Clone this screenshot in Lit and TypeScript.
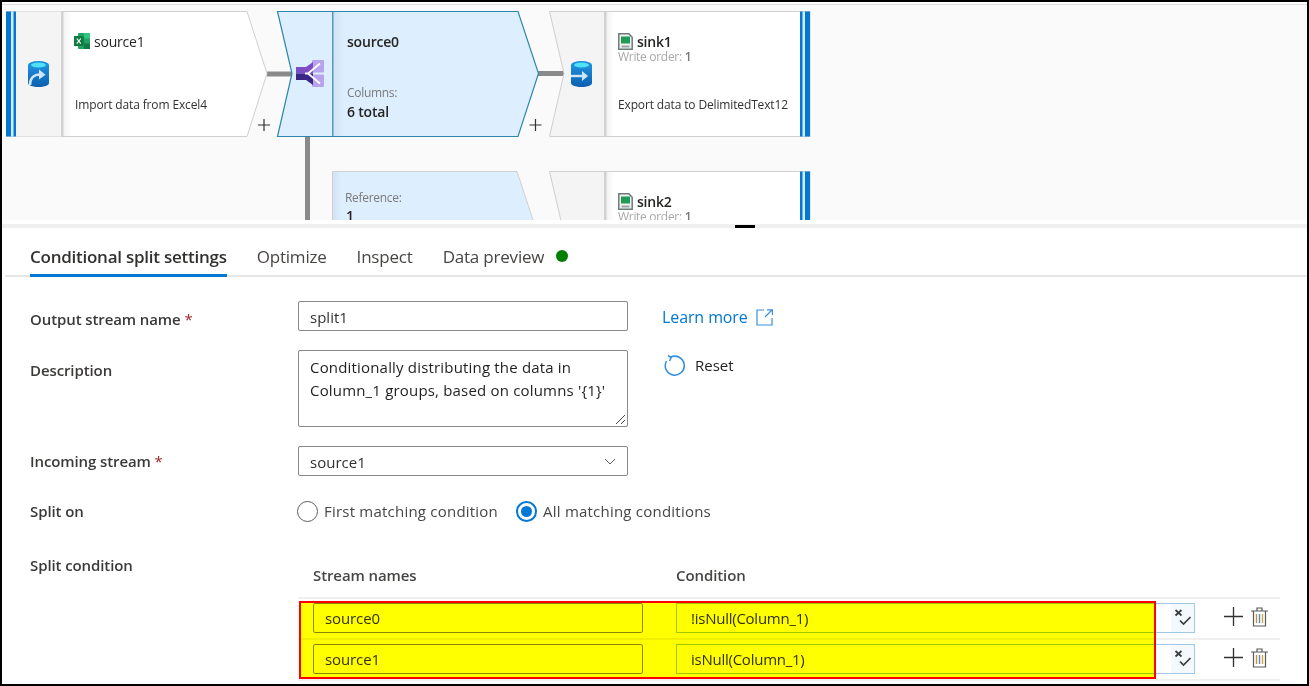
import { LitElement, html, css, svg } from "lit";
import { customElement } from "lit/decorators.js";

const barrel = (x: number, y: number, kind: "src" | "sink") => svg`
  <g transform="translate(${x} ${y})">
    <path d="M0 4v18c0 2.400 4.700 4 10.500 4S21 24.400 21 22V4z" fill="url(#bar)"/>
    <ellipse cx="10.500" cy="4" rx="10.500" ry="4" fill="#1b8fd8"/>
    <ellipse cx="10.500" cy="4" rx="7.500" ry="2.600" fill="#50e0f8"/>
    ${kind === "src"
      ? svg`<path d="M2 24c0-7 4-10.500 10-10.500" fill="none" stroke="#cfe6f8" stroke-width="2.600"/><path d="M11 8.500l6.500 5.200-6.500 4.800z" fill="#cfe6f8"/>`
      : svg`<path d="M0 15h12" stroke="#cfe6f8" stroke-width="2.400"/><path d="M11 10l6 5-6 5z" fill="#cfe6f8"/>`}
  </g>`;

const excel = (x: number, y: number) => svg`
  <g transform="translate(${x} ${y})">
    <rect x="4" y="0" width="12" height="16" rx="1" fill="#21a366"/>
    <rect x="10" y="0" width="6" height="5.500" fill="#33c481"/>
    <rect x="10" y="10.500" width="6" height="5.500" fill="#107c41"/>
    <rect x="4" y="5" width="6" height="6" fill="#185c37" opacity=".6"/>
    <rect x="0" y="3" width="9.500" height="10" fill="#107c41"/>
    <path d="M2.800 5.500l4 5.200M6.800 5.500l-4 5.200" stroke="#fff" stroke-width="1.100"/>
  </g>`;

const csv = (x: number, y: number) => svg`
  <g transform="translate(${x} ${y})">
    <path d="M.8.800h10l3.400 3.400v12.100H.800z" fill="#f2f2f2" stroke="#6d7a7a" stroke-width="1.500"/>
    <rect x="3" y="3.500" width="9" height="7" fill="#1f9a55"/>
    <rect x="3.500" y="12.500" width="8" height="2" fill="#9aa3a3"/>
  </g>`;

const splitIcon = svg`
  <g transform="translate(296 60)">
    <rect x="16" y="0" width="12" height="12.500" rx="1" fill="#b9a2ee"/>
    <rect x="16" y="14.500" width="12" height="12.500" rx="1" fill="#b9a2ee"/>
    <path d="M0 7H10L17 2V13.500H0z" fill="#7c4dc4"/>
    <path d="M0 13.500H17V25L10 20H0z" fill="#3b2685"/>
    <path d="M9 13.500H12L24 3.500M12 13.500L24 23.500" fill="none" stroke="#fff" stroke-width="1.800"/>
  </g>`;

type Label = { x: number; y: number; t: string; b?: string; c: string };
const labels: Label[] = [
  { x: 94, y: 42, t: "source1", c: "name" },
  { x: 75, y: 105, t: "Import data from Excel4", c: "small wide" },
  { x: 347, y: 42, t: "source0", c: "name strong" },
  { x: 347, y: 93, t: "Columns:", c: "small muted" },
  { x: 347, y: 112, t: "6 total", c: "name strong" },
  { x: 637, y: 42, t: "sink1", c: "name strong" },
  { x: 618, y: 57, t: "Write order: ", b: "1", c: "small faint" },
  { x: 618, y: 105, t: "Export data to DelimitedText12", c: "small wide" },
  { x: 345, y: 198, t: "Reference:", c: "small muted" },
  { x: 346, y: 216, t: "1", c: "name strong" },
  { x: 637, y: 202, t: "sink2", c: "name strong" },
  { x: 618, y: 217, t: "Write order: ", b: "1", c: "small faint" },
];

@customElement("cond-row")
class CondRow extends LitElement {
  static properties = { name: {}, expr: {} };
  declare name: string;
  declare expr: string;
  static styles = css`
    :host { display: flex; align-items: center; height: 41px; border-bottom: 2px solid #f0f0f0; box-sizing: border-box; padding-left: 15px; font: 15px "Open Sans", sans-serif; color: #323130; letter-spacing: -0.1px; }
    .name { width: 330px; height: 30px; box-sizing: border-box; border: 1px solid #8a8886; border-radius: 2px; padding: 0 11px; display: flex; align-items: center; margin-top: -1px; }
    .expr { margin-left: 33px; width: 519px; height: 30px; box-sizing: border-box; border: 1px solid #9fc8e6; display: flex; align-items: center; padding-left: 14px; justify-content: space-between; letter-spacing: -0.25px; margin-top: -1px; }
    .btn { width: 23px; height: 28px; background: #f3f9fd; display: flex; align-items: center; justify-content: center; }
    .plus { margin-left: 29px; display: flex; margin-top: -4px; }
    .trash { margin-left: 8px; display: flex; margin-top: -4px; }
  `;
  render() {
    return html`
      <div class="name">${this.name}</div>
      <div class="expr">${this.expr}
        <div class="btn"><svg width="20" height="20" viewBox="0 0 20 20" fill="none" stroke="#3c3c3c" stroke-width="1.700"><path d="M2.500 2l6 5.500M8.500 2l-6 5.500"/><path d="M7 12.500l3.500 3.500 7-7"/></svg></div>
      </div>
      <div class="plus"><svg width="19" height="19" viewBox="0 0 19 19" stroke="#323130" stroke-width="1.300"><path d="M0 9.500h19M9.500 0v19"/></svg></div>
      <div class="trash"><svg width="17" height="20" viewBox="0 0 17 20" fill="none" stroke="#5a5a5a" stroke-width="1.200"><path d="M0 4h17M6 4V1h5v3"/><path d="M2.500 4v15h12V4"/><path d="M5.500 7v9" stroke="#d98a3a" stroke-width="1.400"/><path d="M8.500 7v9" stroke="#4a90c8" stroke-width="1.400"/><path d="M11.500 7v9" stroke="#d9a23a" stroke-width="1.400"/></svg></div>
    `;
  }
}

@customElement("app-root")
class AppRoot extends LitElement {
  static styles = css`
    :host { display: block; width: 1309px; height: 686px; overflow: hidden; }
    * { box-sizing: border-box; }
    .frame { width: 1309px; height: 686px; border: 2px solid #000; display: flex; flex-direction: column; overflow: hidden; background: #fff; font-family: "Open Sans", "Noto Sans", sans-serif; color: #323130; }
    .canvas { position: relative; height: 218px; flex: none; overflow: hidden; background: #fafafa; }
    .canvas svg { position: absolute; left: 0; top: 0; }
    .lab { position: absolute; line-height: 16px; white-space: nowrap; }
    .name { font-size: 14px; color: #252423; letter-spacing: -0.2px; }
    .strong { font-weight: 600; }
    .small { font-size: 12px; color: #323130; letter-spacing: -0.3px; }
    .wide { letter-spacing: -0.14px; }
    .muted { color: #7a7a7a; }
    .faint { color: #a8a8a8; }
    .faint b { color: #777; font-weight: 600; }
    .gap { height: 4px; flex: none; background: #fff; }
    .split { position: relative; height: 4px; flex: none; background: #f0f0f0; }
    .handle { position: absolute; left: 733px; top: 1px; width: 20px; height: 3px; background: #000; }
    .tabs { display: flex; height: 49px; flex: none; margin-left: 3px; padding-left: 25px; gap: 30px; border-bottom: 2px solid #e6e6e6; font-size: 17px; letter-spacing: -0.2px; }
    .tab { display: flex; align-items: center; gap: 12px; height: 49px; padding-top: 7px; color: #484644; }
    .tab.on { color: #323130; font-weight: 600; letter-spacing: -0.25px; border-bottom: 3px solid #0078d4; padding-top: 10px; }
    .dot { width: 12px; height: 12px; border-radius: 50%; background: #008000; }
    .form { padding: 24px 0 0 28px; display: grid; grid-template-columns: 268px 1fr; row-gap: 19px; font-size: 15px; }
    .fl { font-weight: 600; color: #3b3a39; letter-spacing: -0.1px; font-size: 15px; line-height: 20px; }
    .req { color: #a4262c; font-weight: 400; }
    .line { display: flex; align-items: flex-start; }
    .box { width: 330px; height: 30px; border: 1px solid #8a8886; border-radius: 2px; padding: 1px 11px 0; display: flex; align-items: center; justify-content: space-between; font-size: 15px; letter-spacing: 0.02px; }
    .area { height: 77px; display: block; position: relative; padding: 5px 11px; line-height: 23px; color: #201f1e; letter-spacing: 0.18px; }
    .grip { position: absolute; right: 1px; bottom: 1px; }
    .link { margin-left: 34px; color: #0078d4; font-size: 16px; letter-spacing: -0.1px; display: flex; align-items: center; gap: 8px; height: 30px; padding-top: 2px; }
    .reset { margin-left: 36px; margin-top: 3px; display: flex; align-items: center; gap: 9px; height: 24px; font-size: 15px; color: #201f1e; }
    .radios { display: flex; align-items: center; height: 26px; margin-left: -1px; font-size: 15px; letter-spacing: 0.22px; color: #484644; margin-top: 3px; }
    .radio { width: 21px; height: 21px; border-radius: 50%; border: 1px solid #605e5c; margin-right: 6px; flex: none; display: flex; align-items: center; justify-content: center; }
    .radio.on { border: 2px solid #0078d4; margin-left: 18px; margin-right: 6px; }
    .radio.on::after { content: ""; width: 11px; height: 11px; border-radius: 50%; background: #0078d4; }
    .table { position: relative; width: 982px; }
    .head { display: flex; height: 56px; padding: 22px 0 0 15px; font-weight: 600; font-size: 15px; letter-spacing: -0.1px; border-bottom: 2px solid #f0f0f0; color: #484644; }
    .head span:first-child { width: 363px; }
    .mark { position: absolute; left: 1px; top: 58px; width: 857px; height: 78px; background: #ffff00; mix-blend-mode: multiply; }
    .redbox { position: absolute; left: 1px; top: 58px; width: 857px; height: 78px; border: 2px solid #ff0000; }
  `;

  render() {
    const shade = (x: number, y: number, w = 8) => svg`<rect x=${x} y=${y} width=${w} height="124" fill="url(#sh)"/>`;
    const sink = (y: number) => svg`
      <path d="M549.500 ${y}H605V${y + 125}H549.500L564 ${y + 62}z" fill="#f4f4f4" stroke="#cfcfcf"/>
      <rect x="605" y=${y} width="205" height="125" fill="#fff" stroke="#cfcfcf"/>
      <rect x="604" y=${y} width="2.500" height="125" fill="#d2d2d2"/>
      ${shade(606.5, y + 0.5)}
      <rect x="800" y=${y} width="10" height="125" fill="#0078d4"/>
      <rect x="802.500" y=${y} width="2.500" height="125" fill="#fff" opacity=".85"/>`;
    return html`
      <div class="frame">
        <div class="canvas">
          <svg width="1305" height="218" viewBox="2 2 1305 218">
            <defs>
              <linearGradient id="bar" x1="0" x2="0" y1="0" y2="1"><stop offset="0" stop-color="#1f8fdc"/><stop offset="1" stop-color="#0b5fb0"/></linearGradient>
              <linearGradient id="sh"><stop offset="0" stop-color="#000" stop-opacity=".05"/><stop offset="1" stop-color="#000" stop-opacity="0"/></linearGradient>
            </defs>
            <rect x="2" y="2" width="1305" height="2" fill="#fff"/>
            <rect x="2" y="4" width="1305" height="1" fill="#dedede"/>
            <rect x="267" y="71.500" width="26" height="5" fill="#8a8a8a"/>
            <rect x="538" y="71" width="26" height="5" fill="#8a8a8a"/>
            <rect x="305" y="137" width="5" height="90" fill="#8a8a8a"/>

            <path d="M6.500 11.500H247L267 73.500 247 136.500H6.500z" fill="#fff" stroke="#cfcfcf"/>
            <rect x="6" y="11.500" width="56" height="125" fill="#f4f4f4"/>
            <rect x="6" y="11.500" width="10" height="125" fill="#0078d4"/>
            <rect x="11" y="11.500" width="2.500" height="125" fill="#fff" opacity=".85"/>
            <rect x="61" y="11.500" width="2.500" height="125" fill="#d2d2d2"/>
            ${shade(63.5, 12)}

            <path d="M277.500 11.500H518L538.500 73.500 518 136.500H277.500L292 73.500z" fill="#ddeefe" stroke="#2d86ab" stroke-width="1.200"/>
            <path d="M332.800 11.500V136.500" stroke="#2d86ab" stroke-width="1.200"/>
            ${shade(333.5, 12, 10)}

            ${sink(11.5)}

            <path d="M332.500 171.500H517L538 235H332.500z" fill="#ddeefe" stroke="#cfcfcf"/>
            ${shade(333, 172, 8)}
            ${sink(171.5)}

            ${barrel(28, 61, "src")}
            ${barrel(571, 61, "sink")}
            ${excel(74, 33)}
            ${csv(618, 33)}
            ${csv(618, 193)}
            ${splitIcon}

            <path d="M264 119v12M258 125h12" stroke="#323130" stroke-width="1.200"/>
            <path d="M535.500 119v12M529.500 125h12" stroke="#323130" stroke-width="1.200"/>
          </svg>
          ${labels.map(
            (l) => html`<div class="lab ${l.c}" style="left:${l.x - 2}px;top:${l.y - 10}px">${l.t}${l.b ? html`<b>${l.b}</b>` : ""}</div>`
          )}
        </div>
        <div class="gap"></div>
        <div class="split"><div class="handle"></div></div>
        <div class="tabs">
          <div class="tab on">Conditional split settings</div>
          <div class="tab">Optimize</div>
          <div class="tab">Inspect</div>
          <div class="tab">Data preview <span class="dot"></span></div>
        </div>
        <div class="form">
          <div class="fl" style="margin-top:8px">Output stream name <span class="req">*</span></div>
          <div class="line">
            <div class="box">split1</div>
            <div class="link">Learn more
              <svg width="17" height="17" viewBox="0 0 17 17" fill="none" stroke="#3b8fdc" stroke-width="1.200"><path d="M8 1H1v15h15V9"/><path d="M9 8l7.500-7.500M11 .8h5.500v5.500"/></svg>
            </div>
          </div>

          <div class="fl" style="margin-top:10px">Description</div>
          <div class="line">
            <div class="box area">Conditionally distributing the data in<br />Column_1 groups, based on columns '{1}'
              <svg class="grip" width="11" height="11" viewBox="0 0 11 11" stroke="#444" stroke-width="1"><path d="M1 10l9-9M6 10l4-4"/></svg>
            </div>
            <div class="reset">
              <svg width="22" height="22" viewBox="0 0 22 22" fill="none" stroke="#2f8fe0" stroke-width="1.500"><path d="M6.500 3.200A9.500 9.500 0 1 1 2.500 7"/><path d="M4 1.500L7.200 3.500 5.500 7"/></svg>
              Reset
            </div>
          </div>

          <div class="fl" style="margin-top:5px">Incoming stream <span class="req">*</span></div>
          <div class="box">source1
            <svg width="12" height="7" viewBox="0 0 12 7" fill="none" stroke="#605e5c" stroke-width="1"><path d="M1 1l5 5 5-5"/></svg>
          </div>

          <div class="fl" style="margin-top:6px">Split on</div>
          <div class="radios">
            <span class="radio"></span>First matching condition
            <span class="radio on"></span>All matching conditions
          </div>

          <div class="fl" style="margin-top:12px">Split condition</div>
          <div class="table">
            <div class="head"><span>Stream names</span><span>Condition</span></div>
            <cond-row name="source0" expr="!isNull(Column_1)"></cond-row>
            <cond-row name="source1" expr="isNull(Column_1)"></cond-row>
            <div class="mark"></div>
            <div class="redbox"></div>
          </div>
        </div>
      </div>
    `;
  }
}
void CondRow;
void AppRoot;
